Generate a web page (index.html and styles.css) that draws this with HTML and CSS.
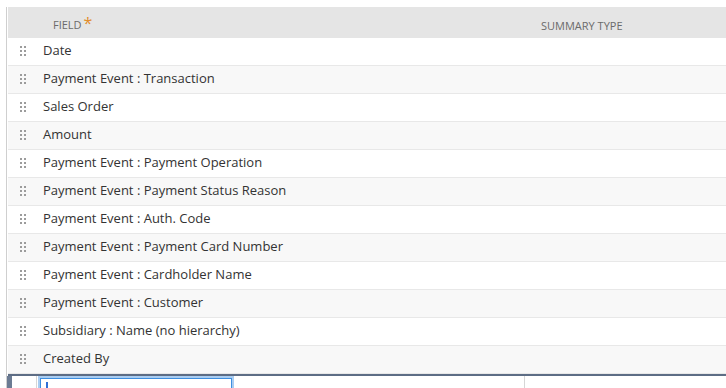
FILE: index.html
```html
<!DOCTYPE html>
<html>
<head>
<meta charset="utf-8">
<link rel="stylesheet" href="styles.css">
</head>
<body>
<div class="frame">
  <div class="table">
    <div class="head">
      <div class="c1"><span class="hlabel">Field</span><span class="req">*</span></div>
      <div class="c2"><span class="hlabel">Summary Type</span></div>
    </div>
    <div class="row"><span class="grip"></span><span class="txt">Date</span></div>
    <div class="row alt"><span class="grip"></span><span class="txt">Payment Event : Transaction</span></div>
    <div class="row"><span class="grip"></span><span class="txt">Sales Order</span></div>
    <div class="row alt"><span class="grip"></span><span class="txt">Amount</span></div>
    <div class="row"><span class="grip"></span><span class="txt">Payment Event : Payment Operation</span></div>
    <div class="row alt"><span class="grip"></span><span class="txt">Payment Event : Payment Status Reason</span></div>
    <div class="row"><span class="grip"></span><span class="txt">Payment Event : Auth. Code</span></div>
    <div class="row alt"><span class="grip"></span><span class="txt">Payment Event : Payment Card Number</span></div>
    <div class="row"><span class="grip"></span><span class="txt">Payment Event : Cardholder Name</span></div>
    <div class="row alt"><span class="grip"></span><span class="txt">Payment Event : Customer</span></div>
    <div class="row"><span class="grip"></span><span class="txt">Subsidiary : Name (no hierarchy)</span></div>
    <div class="row alt"><span class="grip"></span><span class="txt">Created By</span></div>
    <div class="edit">
      <div class="strip"></div>
      <div class="ecell0"></div>
      <div class="ecell1">
        <div class="input"><span class="caret"></span><span class="arrow"></span></div>
      </div>
      <div class="ecell2"></div>
    </div>
  </div>
</div>
</body>
</html>
```
FILE: styles.css
```css
html, body {
  margin: 0;
  padding: 0;
  background: #fff;
  font-family: "Open Sans", "Liberation Sans", sans-serif;
  overflow: hidden;
}
.frame {
  width: 726px;
  height: 388px;
  padding-top: 7px;
  box-sizing: border-box;
  padding-left: 6px;
}
.table {
  border-left: 1px solid #cfcfcf;
  padding-left: 1px;
  height: 381px;
}
.head {
  display: grid;
  grid-template-columns: 516px 1fr;
  height: 31px;
  box-sizing: border-box;
  padding-top: 3px;
  background: #e5e5e5;
  align-items: center;
}
.hlabel {
  font-size: 11px;
  text-transform: uppercase;
  color: #6b6b6b;
}
.c1 { padding-left: 45px; display: flex; align-items: center; }
.c2 { padding-left: 17px; }
.req {
  color: #e28d2c;
  font-size: 16px;
  line-height: 10px;
  margin-left: 2px;
  position: relative;
  top: -1px;
}
.row {
  display: flex;
  align-items: center;
  height: 28px;
  box-sizing: border-box;
  padding-bottom: 3px;
  border-bottom: 1px solid #e8e8e8;
  background: #fff;
}
.row.alt { background: #f8f8f8; }
.grip {
  width: 6px;
  height: 10px;
  margin-left: 12px;
  margin-right: 17px;
  background-image: radial-gradient(circle, #9c9c9c 0.9px, transparent 1.1px);
  background-size: 4px 4px;
  background-position: -1px -1px;
  position: relative;
  top: 1px;
}
.txt {
  font-size: 13px;
  color: #333;
}
.edit {
  display: flex;
  height: 14px;
  border-top: 2px solid #5d6d85;
}
.strip {
  width: 5px;
  margin-left: -1px;
  background: #6b7b93;
}
.ecell0 {
  width: 24px;
  border-right: 1px solid #d6d6d6;
}
.ecell1 {
  width: 488px;
  border-right: 1px solid #d6d6d6;
  padding: 2px 0 0 3px;
  box-sizing: border-box;
}
.input {
  width: 190px;
  height: 20px;
  border: 1px solid #3d8ee0;
  box-shadow: 0 0 0 2px #a9cdf2;
  background: #fff;
  position: relative;
}
.caret {
  position: absolute;
  left: 5px;
  top: 3px;
  width: 2px;
  height: 14px;
  background: #2f6fd6;
}
.arrow {
  position: absolute;
  left: 172px;
  top: 9px;
  width: 11px;
  height: 2px;
  background: #7a8696;
}
.ecell2 { flex: 1; }
```
